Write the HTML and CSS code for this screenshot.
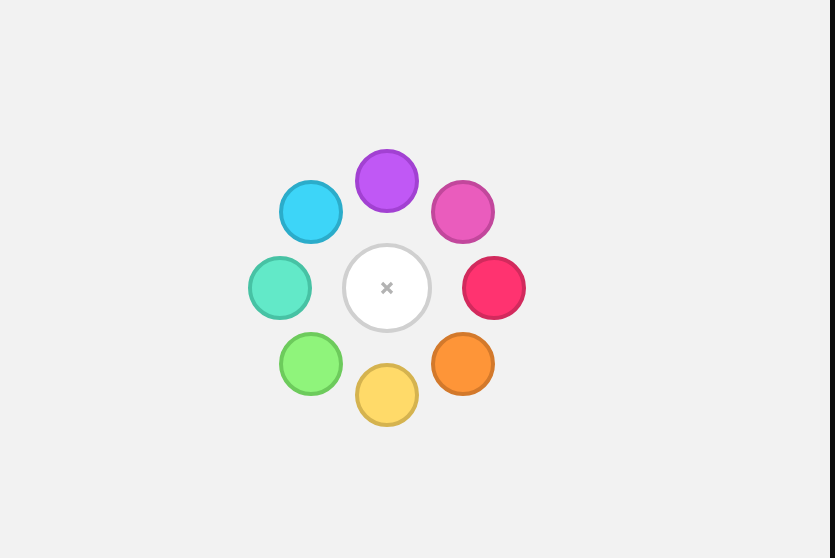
FILE: index.html
```html
<!DOCTYPE html>
<html>
<head>
<meta charset="utf-8">
<link rel="stylesheet" href="styles.css">
</head>
<body>
<div class="page">
  <main class="stage">
    <div class="wheel">
      <button class="swatch purple" aria-label="purple"></button>
      <button class="swatch pink" aria-label="pink"></button>
      <button class="swatch red" aria-label="red"></button>
      <button class="swatch orange" aria-label="orange"></button>
      <button class="swatch yellow" aria-label="yellow"></button>
      <button class="swatch green" aria-label="green"></button>
      <button class="swatch teal" aria-label="teal"></button>
      <button class="swatch cyan" aria-label="cyan"></button>
      <button class="center" aria-label="close">
        <svg width="18" height="18" viewBox="0 0 18 18"><path d="M4 4 L14 14 M14 4 L4 14" stroke="#b3b3b3" stroke-width="3.2" stroke-linecap="butt" fill="none"/></svg>
      </button>
    </div>
  </main>
  <div class="edge"></div>
</div>
</body>
</html>
```

FILE: styles.css
```css
html, body {
  margin: 0;
  padding: 0;
  height: 100%;
}
body {
  background: #f2f2f2;
  font-family: "Liberation Sans", Arial, sans-serif;
}
.page {
  display: flex;
  height: 100%;
}
.stage {
  flex: 1;
  padding: 148px 0 0 247px;
}
.edge {
  width: 5px;
  background: #0c0c0c;
}
.wheel {
  position: relative;
  width: 280px;
  height: 280px;
}
.swatch {
  position: absolute;
  width: 64px;
  height: 64px;
  box-sizing: border-box;
  border-radius: 50%;
  border: 4px solid;
  padding: 0;
  margin: 0;
  cursor: pointer;
}
.purple { left: 108px; top: 1px; background: #c058f5; border-color: #a241d2; }
.pink   { left: 183.7px; top: 32.3px; background: #ea5cbd; border-color: #c2479c; }
.red    { left: 215px; top: 108px; background: #ff3370; border-color: #d22a5d; }
.orange { left: 183.7px; top: 183.7px; background: #fe9538; border-color: #d3792b; }
.yellow { left: 108px; top: 215px; background: #ffda69; border-color: #d5b34f; }
.green  { left: 32.3px; top: 183.7px; background: #8ff47b; border-color: #6dcb5c; }
.teal   { left: 1px; top: 108px; background: #62e9c8; border-color: #47c2a4; }
.cyan   { left: 32.3px; top: 32.3px; background: #3dd5f8; border-color: #2bacca; }
.center {
  position: absolute;
  left: 95px;
  top: 95px;
  width: 90px;
  height: 90px;
  box-sizing: border-box;
  border-radius: 50%;
  border: 4px solid #d0d0d0;
  background: #ffffff;
  padding: 0;
  margin: 0;
  display: flex;
  align-items: center;
  justify-content: center;
  cursor: pointer;
}
.center svg {
  display: block;
}
```
